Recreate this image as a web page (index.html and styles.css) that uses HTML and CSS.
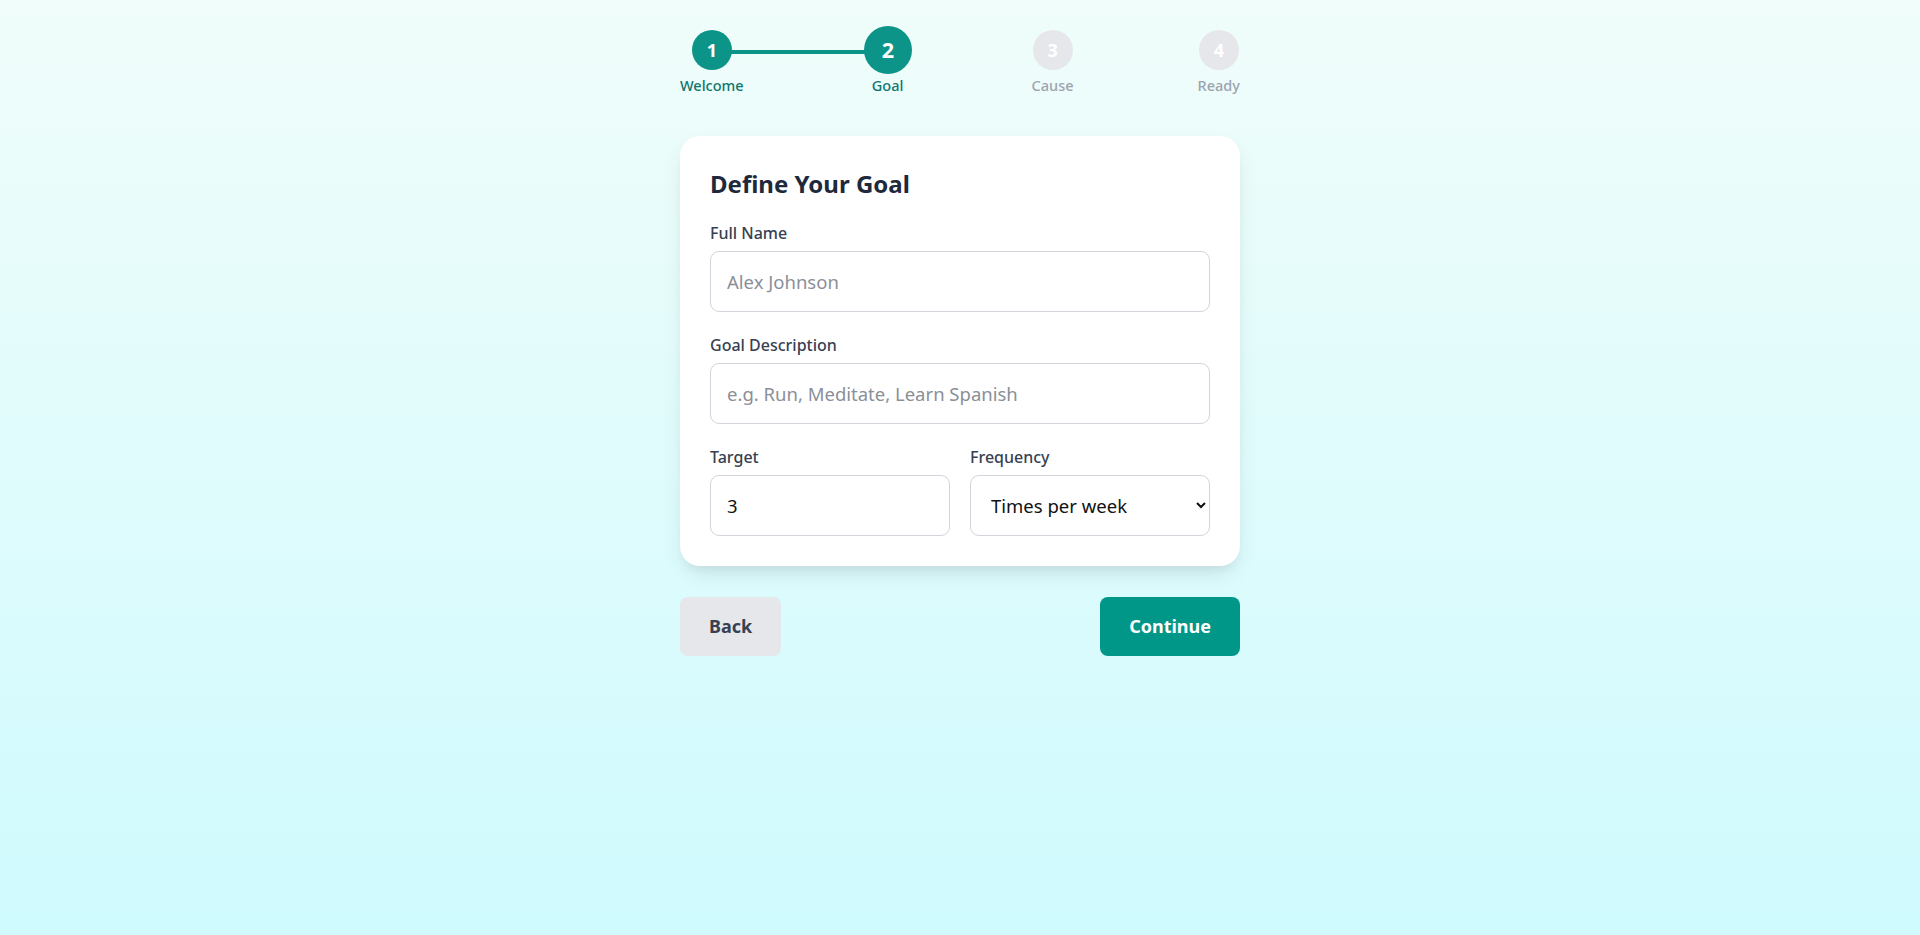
FILE: index.html
```html
<!DOCTYPE html>
<html lang="en">
<head>
<meta charset="utf-8">
<title>Define Your Goal</title>
<link rel="stylesheet" href="styles.css">
</head>
<body>
<main class="page">
  <div class="wizard">
    <div class="stepper">
      <div class="progress-line"></div>
      <div class="step done">
        <div class="step-circle">1</div>
        <div class="step-label">Welcome</div>
      </div>
      <div class="step current">
        <div class="step-circle">2</div>
        <div class="step-label">Goal</div>
      </div>
      <div class="step">
        <div class="step-circle">3</div>
        <div class="step-label">Cause</div>
      </div>
      <div class="step">
        <div class="step-circle">4</div>
        <div class="step-label">Ready</div>
      </div>
    </div>

    <section class="card">
      <h2 class="card-title">Define Your Goal</h2>
      <div class="field">
        <label class="field-label" for="name">Full Name</label>
        <input class="field-input" id="name" type="text" placeholder="Alex Johnson">
      </div>
      <div class="field">
        <label class="field-label" for="goal">Goal Description</label>
        <input class="field-input" id="goal" type="text" placeholder="e.g. Run, Meditate, Learn Spanish">
      </div>
      <div class="field-row">
        <div class="field">
          <label class="field-label" for="target">Target</label>
          <input class="field-input" id="target" type="number" value="3">
        </div>
        <div class="field">
          <label class="field-label" for="freq">Frequency</label>
          <select class="field-input field-select" id="freq">
            <option>Times per week</option>
            <option>Times per day</option>
            <option>Times per month</option>
          </select>
        </div>
      </div>
    </section>

    <div class="actions">
      <button class="btn btn-back" type="button">Back</button>
      <button class="btn btn-continue" type="button">Continue</button>
    </div>
  </div>
</main>
</body>
</html>
```

FILE: styles.css
```css
* {
  box-sizing: border-box;
}

html, body {
  margin: 0;
  padding: 0;
}

body {
  min-height: 100vh;
  font-family: "Noto Sans", "Open Sans", sans-serif;
  background: linear-gradient(180deg, #f0fdfa 0%, #cffafe 100%);
  color: #1f2937;
}

.page {
  display: flex;
  justify-content: center;
  padding: 30px 16px;
}

.wizard {
  width: 560px;
}

/* Stepper */
.stepper {
  position: relative;
  display: flex;
  justify-content: space-between;
  align-items: flex-start;
  margin-bottom: 40px;
}

.progress-line {
  position: absolute;
  top: 20px;
  left: 31px;
  width: 170px;
  height: 4px;
  background: #0d9488;
  z-index: 0;
}

.step {
  position: relative;
  z-index: 1;
  display: flex;
  flex-direction: column;
  align-items: center;
  min-width: 40px;
}

.step-circle {
  width: 40px;
  height: 40px;
  border-radius: 50%;
  background: #e5e7eb;
  color: #ffffff;
  display: flex;
  align-items: center;
  justify-content: center;
  font-size: 18px;
  font-weight: 700;
}

.step.done .step-circle,
.step.current .step-circle {
  background: #0d9488;
}

.step.current .step-circle {
  transform: scale(1.2);
}

.step-label {
  margin-top: 5px;
  font-size: 14.5px;
  line-height: 21px;
  font-weight: 500;
  color: #9ca3af;
}

.step.done .step-label,
.step.current .step-label {
  color: #0f766e;
}

/* Card */
.card {
  background: #ffffff;
  border-radius: 20px;
  padding: 30px;
  box-shadow: 0 10px 25px -5px rgba(0, 0, 0, 0.1), 0 8px 12px -6px rgba(0, 0, 0, 0.07);
}

.card-title {
  margin: 0 0 21px;
  font-size: 24px;
  line-height: 36px;
  font-weight: 700;
  color: #1e293b;
}

.field {
  display: flex;
  flex-direction: column;
  margin-bottom: 23px;
}

.field-row {
  display: grid;
  grid-template-columns: 1fr 1fr;
  gap: 20px;
}

.field-row .field {
  margin-bottom: 0;
}

.field-label {
  font-size: 16px;
  line-height: 21px;
  font-weight: 500;
  color: #374151;
  margin-bottom: 7px;
}

.field-input {
  width: 100%;
  height: 61px;
  padding: 0 16px;
  font-family: inherit;
  font-size: 18.5px;
  color: #111111;
  background: #ffffff;
  border: 1px solid #d1d5db;
  border-radius: 9px;
  outline: none;
}

.field-input::placeholder {
  color: #8a8f98;
}

.field-select {
  padding: 0 2px 0 16px;
}

/* Actions */
.actions {
  display: flex;
  justify-content: space-between;
  margin-top: 31px;
}

.btn {
  font-family: inherit;
  font-size: 18px;
  line-height: 27px;
  font-weight: 700;
  padding: 16px 29px;
  border: none;
  border-radius: 8px;
  cursor: pointer;
}

.btn-back {
  background: #e5e7eb;
  color: #374151;
}

.btn-continue {
  background: #009688;
  color: #ffffff;
}
```
